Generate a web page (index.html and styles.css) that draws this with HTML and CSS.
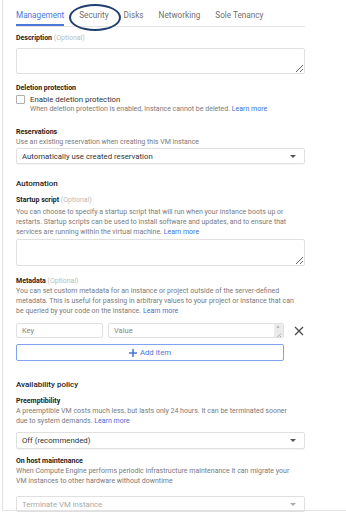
FILE: index.html
```html
<!DOCTYPE html>
<html>
<head>
<meta charset="utf-8">
<link rel="stylesheet" href="styles.css">
</head>
<body>
<div class="panel">
  <div class="content">
    <div class="tabs">
      <span class="tab active">Management</span>
      <span class="tab circled">Security</span>
      <span class="tab">Disks</span>
      <span class="tab">Networking</span>
      <span class="tab">Sole Tenancy</span>
    </div>

    <div class="label l-desc">Description <span class="opt">(Optional)</span></div>
    <textarea class="area area-desc"></textarea>

    <div class="label l-del">Deletion protection</div>
    <div class="check-row">
      <span class="checkbox"></span>
      <span class="check-text">Enable deletion protection</span>
    </div>
    <div class="help help-indent">When deletion protection is enabled, instance cannot be deleted. <span class="link">Learn more</span></div>

    <div class="label l-res">Reservations</div>
    <div class="help">Use an existing reservation when creating this VM instance</div>
    <div class="select s-res"><span>Automatically use created reservation</span><span class="caret"></span></div>

    <div class="heading h-auto">Automation</div>
    <div class="label l-start">Startup script <span class="opt">(Optional)</span></div>
    <div class="help help-start">You can choose to specify a startup script that will run when your instance boots up or<br>restarts. Startup scripts can be used to install software and updates, and to ensure that<br>services are running within the virtual machine. <span class="link">Learn more</span></div>
    <textarea class="area area-start"></textarea>

    <div class="label l-meta">Metadata <span class="opt">(Optional)</span></div>
    <div class="help help-meta">You can set custom metadata for an instance or project outside of the server-defined<br>metadata. This is useful for passing in arbitrary values to your project or instance that can<br>be queried by your code on the instance. <span class="link">Learn more</span></div>
    <div class="kv-row">
      <div class="field key">Key</div>
      <div class="field value"><span>Value</span><span class="scroll"><svg width="8" height="15" viewBox="0 0 8 15"><path d="M2.5 3.5 L4 2 L5.5 3.5 Z" fill="#888"/><path d="M7 9.5 L2.5 14 M7 12 L5 14" stroke="#999" stroke-width="0.8"/></svg></span></div>
      <svg class="xicon" width="10" height="10" viewBox="0 0 10 10"><path d="M1 1 L9 9 M9 1 L1 9" stroke="#4a4a4a" stroke-width="1.3"/></svg>
    </div>
    <div class="add-btn"><svg width="8" height="8" viewBox="0 0 8 8"><path d="M4 0 V8 M0 4 H8" stroke="#4a78d8" stroke-width="1.6"/></svg><span>Add item</span></div>

    <div class="heading h-avail">Availability policy</div>
    <div class="label l-pre">Preemptibility</div>
    <div class="help">A preemptible VM costs much less, but lasts only 24 hours. It can be terminated sooner<br>due to system demands. <span class="link">Learn more</span></div>
    <div class="select s-pre"><span>Off (recommended)</span><span class="caret"></span></div>

    <div class="label l-host">On host maintenance</div>
    <div class="help">When Compute Engine performs periodic infrastructure maintenance it can migrate your<br>VM instances to other hardware without downtime</div>
    <div class="select s-term disabled"><span>Terminate VM instance</span><span class="caret"></span></div>
  </div>
</div>
</body>
</html>
```

FILE: styles.css
```css
* { box-sizing: border-box; }
html, body { margin: 0; padding: 0; background: #fff; }
body {
  width: 346px;
  height: 512px;
  overflow: hidden;
  font-family: Roboto, "Liberation Sans", sans-serif;
  color: #333;
}
.panel {
  margin-left: 2px;
  width: 360px;
  height: 511px;
  border-left: 1px solid #e2e2e2;
  border-bottom: 1px solid #e2e2e2;
  padding-left: 13px;
}
.content {
  width: 289px;
  display: flex;
  flex-direction: column;
}
.tabs {
  display: flex;
  gap: 15px;
  height: 27px;
  border-bottom: 1px solid #e3e3e3;
  font-size: 8.2px;
  color: #707070;
}
.tab {
  padding-top: 10px;
  line-height: 10px;
  height: 26px;
  position: relative;
}
.tab.active {
  color: #4a78d8;
  border-bottom: 2px solid #4a78d8;
}
.tab.circled::after {
  content: "";
  position: absolute;
  left: -10px;
  top: 4px;
  width: 48px;
  height: 23px;
  border: 2.3px solid #1f3f70;
  border-radius: 50%;
}
.label {
  font-size: 7px;
  line-height: 10px;
  font-weight: 700;
  color: #222;
}
.opt { font-weight: 400; color: #bbb; }
.heading {
  font-size: 8px;
  line-height: 10px;
  font-weight: 500;
  color: #222;
}
.help {
  font-size: 7px;
  line-height: 10px;
  color: #7a7a7a;
  white-space: nowrap;
}
.link { color: #3b6fd6; }
.area {
  display: block;
  width: 289px;
  border: 1px solid #e0e0e0;
  border-radius: 2px;
  resize: vertical;
  margin: 0;
  padding: 0;
  outline: none;
  background: #fff;
}
.l-desc { margin-top: 6px; }
.area-desc { margin-top: 5px; height: 26px; }
.l-del { margin-top: 9px; }
.check-row {
  display: flex;
  align-items: center;
  height: 11px;
  margin-top: 1px;
}
.checkbox {
  width: 9px;
  height: 9px;
  border: 1px solid #b0b0b0;
  border-radius: 1px;
}
.check-text {
  margin-left: 5px;
  font-size: 7.8px;
  color: #333;
}
.help-indent { padding-left: 14px; line-height: 9px; }
.l-res { margin-top: 13px; }
.select {
  margin-top: 1px;
  height: 16px;
  border: 1px solid #e0e0e0;
  border-radius: 2px;
  display: flex;
  align-items: center;
  justify-content: space-between;
  padding: 0 8px 0 5px;
  font-size: 7.8px;
  color: #333;
  box-shadow: 0 1px 1px rgba(0,0,0,0.04);
}
.caret {
  width: 0;
  height: 0;
  border-left: 3px solid transparent;
  border-right: 3px solid transparent;
  border-top: 3px solid #555;
}
.h-auto { margin-top: 15px; }
.l-start { margin-top: 6px; }
.help-start { margin-top: 2px; }
.area-start { margin-top: 2px; height: 27px; }
.l-meta { margin-top: 10px; }
.kv-row {
  margin-top: 7px;
  display: flex;
  align-items: center;
  gap: 5px;
}
.field {
  height: 15px;
  border: 1px solid #e0e0e0;
  border-radius: 2px;
  font-size: 7.5px;
  color: #888;
  display: flex;
  align-items: center;
  padding-left: 5px;
}
.key { width: 87px; }
.value {
  width: 176px;
  justify-content: space-between;
  padding-right: 0;
}
.scroll {
  width: 9px;
  height: 13px;
  background: #ebebeb;
  display: flex;
  overflow: hidden;
}
.xicon { margin-left: 5px; }
.add-btn {
  margin-top: 6px;
  width: 268px;
  height: 17px;
  border: 1px solid #7fa3ee;
  border-radius: 2px;
  display: flex;
  align-items: center;
  justify-content: center;
  gap: 3px;
  font-size: 7.8px;
  color: #4a78d8;
}
.h-avail { margin-top: 19px; }
.l-pre { margin-top: 6px; }
.s-pre { margin-top: 6px; height: 17px; }
.l-host { margin-top: 7px; }
.s-term { margin-top: 10px; }
.disabled { color: #aaa; }
.disabled .caret { border-top-color: #aaa; }
```
